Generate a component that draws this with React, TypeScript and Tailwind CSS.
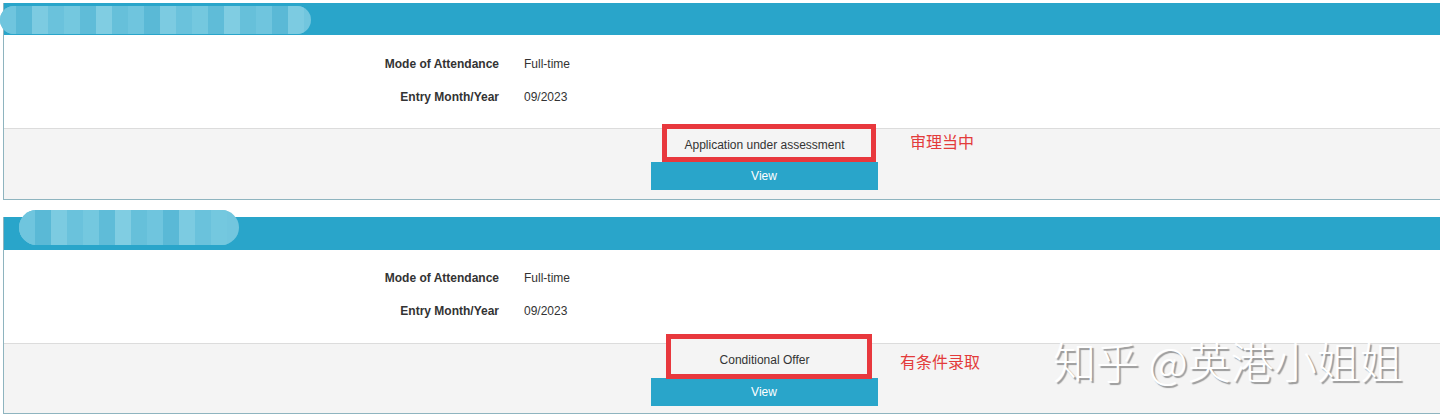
const applications = [
  {
    mode: "Full-time",
    entry: "09/2023",
    status: "Application under assessment",
    note: "审理当中",
  },
  {
    mode: "Full-time",
    entry: "09/2023",
    status: "Conditional Offer",
    note: "有条件录取",
  },
];

// mosaic tiles for the redacted course title
const tiles = ["#6fc5de", "#5fbcd8", "#7ccbe1", "#66c0da", "#74c8df", "#5ab9d6", "#80cde2", "#6ac2dc"];

function Redacted({ width }: { width: number }) {
  const count = Math.floor(width / 16);
  return (
    <div
      className="flex h-full overflow-hidden rounded-full bg-[#72c6de]"
      style={{ width }}
    >
      {Array.from({ length: count }).map((_, i) => (
        <div key={i} className="h-full w-4 shrink-0" style={{ backgroundColor: tiles[(i * 5) % tiles.length] }} />
      ))}
    </div>
  );
}

export default function App() {
  return (
    <div className="relative h-[419px] overflow-hidden bg-white pt-[3px] font-['Liberation_Sans',Arial,sans-serif] text-[12px] text-[#333]">
      {applications.map((app, idx) => (
        <div
          key={idx}
          className={`relative ml-[3px] w-[1522px] border-x border-b border-[#8eb4bf] ${idx === 0 ? "" : "mt-[17px]"}`}
        >
          <div className={`bg-[#29a5ca] ${idx === 0 ? "h-[32px]" : "h-[33px]"}`} />

          {/* blurred course name over the header */}
          {idx === 0 ? (
            <div className="absolute -left-[4px] top-[3px] h-[28px]">
              <Redacted width={311} />
            </div>
          ) : (
            <div className="absolute left-[15px] -top-[7px] h-[35px]">
              <Redacted width={220} />
            </div>
          )}

          <div className={idx === 0 ? "pt-[12px] pb-[15px]" : "pt-[11px] pb-[16px]"}>
            <div className="flex h-[33px] items-center">
              <div className="w-[495px] text-right font-bold">Mode of Attendance</div>
              <div className="ml-[25px]">{app.mode}</div>
            </div>
            <div className="flex h-[33px] items-center">
              <div className="w-[495px] text-right font-bold">Entry Month/Year</div>
              <div className="ml-[25px]">{app.entry}</div>
            </div>
          </div>

          <div
            className={`flex flex-col items-center border-t border-[#dcdcdc] bg-[#f4f4f4] ${
              idx === 0 ? "pb-[9px]" : "pb-[7px]"
            }`}
          >
            <div
              className={`relative ml-[10px] flex items-center justify-center border-[5px] border-[#e8383d] bg-[#f4f4f4] ${
                idx === 0 ? "-mt-[5px] h-[38px] w-[214px]" : "-mt-[10px] h-[45px] w-[206px]"
              }`}
            >
              <span className={`-ml-[9px] ${idx === 0 ? "mt-[4px]" : "mt-[6px]"}`}>{app.status}</span>
              <span
                className={`absolute whitespace-nowrap font-['Noto_Sans_CJK_SC',sans-serif] text-[16px] text-[#e33b3b] ${
                  idx === 0 ? "left-[243px] top-0" : "left-[229px] top-[10px]"
                }`}
              >
                {app.note}
              </span>
            </div>
            <button
              className={`h-[28px] w-[227px] bg-[#29a5ca] text-[12px] text-white ${idx === 0 ? "mt-0" : "-mt-[1px]"}`}
            >
              View
            </button>
          </div>
        </div>
      ))}

      {/* site watermark */}
      <div className="absolute left-[1053px] top-[334px] whitespace-nowrap font-['Noto_Sans_CJK_SC',sans-serif] text-[43px] font-light leading-[52px] text-white [text-shadow:2px_2px_1px_#9a9a9a]">
        知乎 @英港小姐姐
      </div>
    </div>
  );
}
